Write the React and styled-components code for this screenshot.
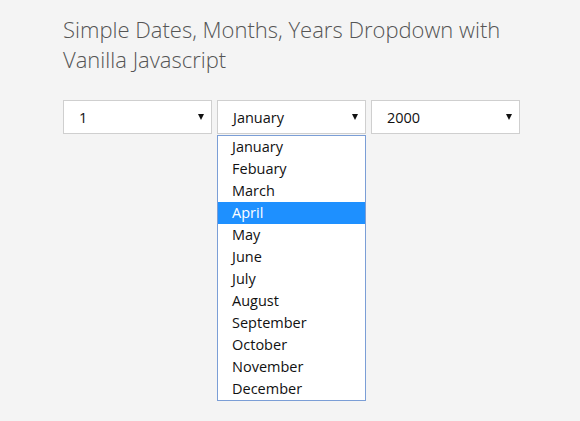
import React from 'react';
import styled, { createGlobalStyle } from 'styled-components';

const months = [
    'January', 'Febuary', 'March', 'April', 'May', 'June',
    'July', 'August', 'September', 'October', 'November', 'December',
];

const GlobalStyle = createGlobalStyle`
    html, body {
        margin: 0;
        padding: 0;
        background-color: #f4f4f4;
    }
    body {
        font-family: "Open Sans", "Noto Sans", sans-serif;
    }
`;

const Page = styled.div`
    padding: 14px 0 0 63px;
    min-height: 100vh;
    box-sizing: border-box;
`;

const Title = styled.h1`
    margin: 0;
    width: 500px;
    font-size: 22px;
    line-height: 30px;
    font-weight: 300;
    color: #555;
`;

const Row = styled.div`
    display: flex;
    gap: 5px;
    margin-top: 26px;
`;

const SelectWrap = styled.div`
    position: relative;
    width: 149px;
`;

const SelectBox = styled.div`
    display: flex;
    align-items: center;
    justify-content: space-between;
    height: 34px;
    box-sizing: border-box;
    padding: 0 7px 0 15px;
    background-color: #fff;
    border: 1px solid #cfcfcf;
    font-size: 14.5px;
    color: #111;
`;

const Arrow = styled.span`
    width: 0;
    height: 0;
    border-left: 3.5px solid transparent;
    border-right: 3.5px solid transparent;
    border-top: 6px solid #111;
`;

const Options = styled.ul`
    position: absolute;
    top: 35px;
    left: 0;
    right: 0;
    margin: 0;
    padding: 0;
    list-style: none;
    background-color: #fff;
    border: 1px solid #7b9ed6;
`;

const Option = styled.li`
    height: 22px;
    line-height: 22px;
    padding-left: 14px;
    font-size: 14.5px;
    color: ${(p) => (p.$active ? '#fff' : '#111')};
    background-color: ${(p) => (p.$active ? '#1e90ff' : 'transparent')};
`;

const Select = ({ value, children }) => (
    <SelectWrap>
        <SelectBox>
            <span>{value}</span>
            <Arrow />
        </SelectBox>
        {children}
    </SelectWrap>
);

const App = () => {
    return (
        <Page>
            <GlobalStyle />
            <Title>Simple Dates, Months, Years Dropdown with Vanilla Javascript</Title>
            <Row>
                <Select value="1" />
                <Select value="January">
                    <Options>
                        {months.map((m) => (
                            <Option key={m} $active={m === 'April'}>{m}</Option>
                        ))}
                    </Options>
                </Select>
                <Select value="2000" />
            </Row>
        </Page>
    );
};

export default App;
